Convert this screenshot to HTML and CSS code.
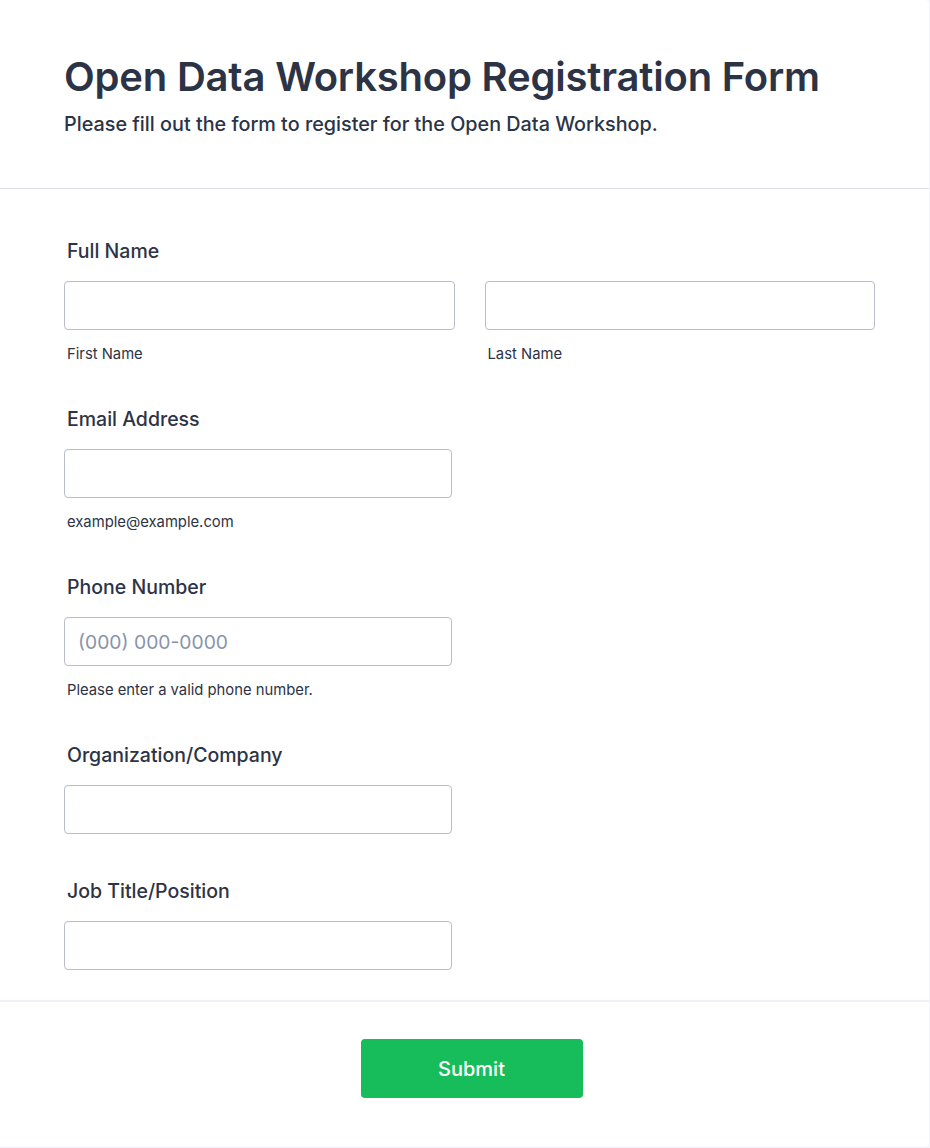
FILE: index.html
```html
<!DOCTYPE html>
<html lang="en">
<head>
<meta charset="utf-8">
<title>Open Data Workshop Registration Form</title>
<link rel="stylesheet" href="styles.css">
</head>
<body>
<main class="card">
  <header class="form-header">
    <h1 class="form-title">Open Data Workshop Registration Form</h1>
    <p class="form-subtitle">Please fill out the form to register for the Open Data Workshop.</p>
  </header>
  <form class="form-body">
    <div class="field">
      <label class="field-label">Full Name</label>
      <div class="name-row">
        <div class="name-col">
          <input class="text-input" type="text">
          <span class="sublabel">First Name</span>
        </div>
        <div class="name-col">
          <input class="text-input" type="text">
          <span class="sublabel">Last Name</span>
        </div>
      </div>
    </div>
    <div class="field">
      <label class="field-label">Email Address</label>
      <input class="text-input narrow" type="email">
      <span class="sublabel">example@example.com</span>
    </div>
    <div class="field">
      <label class="field-label">Phone Number</label>
      <input class="text-input narrow" type="tel" placeholder="(000) 000-0000">
      <span class="sublabel">Please enter a valid phone number.</span>
    </div>
    <div class="field">
      <label class="field-label">Organization/Company</label>
      <input class="text-input narrow" type="text">
    </div>
    <div class="field">
      <label class="field-label">Job Title/Position</label>
      <input class="text-input narrow" type="text">
    </div>
  </form>
  <footer class="form-footer">
    <button class="submit-btn" type="button">Submit</button>
  </footer>
</main>
</body>
</html>
```

FILE: styles.css
```css
* {
  box-sizing: border-box;
}

html, body {
  margin: 0;
  padding: 0;
}

body {
  background: #f3f3fe;
  font-family: Inter, "Noto Sans", "Liberation Sans", sans-serif;
  color: #2c3345;
}

.card {
  width: 929px;
  height: 1147px;
  background: #ffffff;
  border-radius: 0 4px 4px 0;
  display: flex;
  flex-direction: column;
}

.form-header {
  padding: 53px 64px 52px;
  border-bottom: 1px solid #dcdcec;
}

.form-title {
  margin: 0;
  font-size: 40px;
  line-height: 48px;
  font-weight: 600;
  letter-spacing: -0.2px;
}

.form-subtitle {
  margin: 11px 0 0;
  font-size: 19.8px;
  line-height: 24px;
  font-weight: 500;
}

.form-body {
  padding: 50px 54px 30px 64px;
  display: flex;
  flex-direction: column;
  gap: 45px;
  border-bottom: 2px solid #eef0f7;
}

.field {
  display: flex;
  flex-direction: column;
  align-items: flex-start;
}

.field-label {
  font-size: 19.5px;
  line-height: 24px;
  font-weight: 500;
  padding-left: 3px;
  margin-bottom: 18px;
}

.name-row {
  display: flex;
  gap: 30px;
  width: 100%;
}

.name-col {
  flex: 1;
  display: flex;
  flex-direction: column;
}

.text-input {
  width: 100%;
  height: 49px;
  border: 1px solid #b8bdc9;
  border-radius: 4px;
  background: #fff;
  font-family: inherit;
  font-size: 19.3px;
  color: #2c3345;
  padding: 0 13px;
  outline: none;
}

.text-input.narrow {
  width: 388px;
}

.text-input::placeholder {
  color: #8894ab;
}

.sublabel {
  font-size: 14.8px;
  line-height: 16px;
  margin-top: 16px;
  padding-left: 3px;
  color: #2c3345;
}

.form-footer {
  padding: 37px 50px 0 64px;
  display: flex;
  justify-content: center;
}

.submit-btn {
  width: 222px;
  height: 59px;
  border: none;
  border-radius: 4px;
  background: #18bd5b;
  color: #ffffff;
  font-family: inherit;
  font-size: 20px;
  font-weight: 500;
  cursor: pointer;
}
```
